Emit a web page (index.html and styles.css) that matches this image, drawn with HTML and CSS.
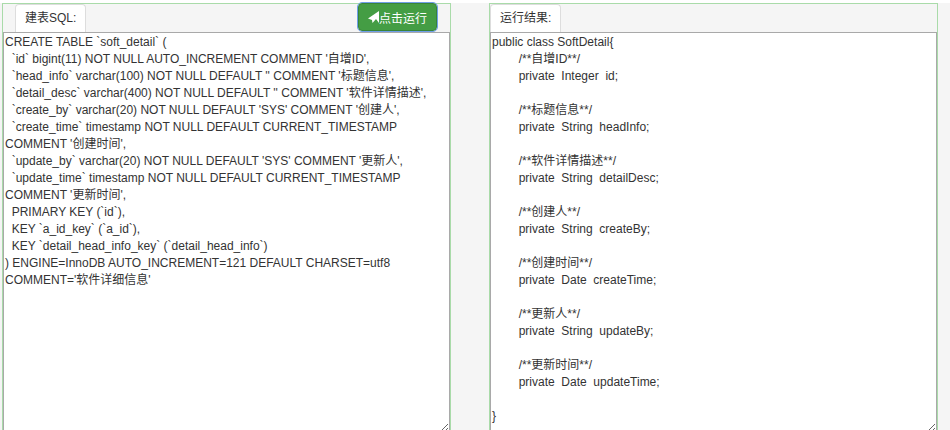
FILE: index.html
```html
<!DOCTYPE html>
<html lang="en">

<head>
    <meta charset="UTF-8">
    <title>SQL转Java</title>
    <link rel="stylesheet" href="styles.css">
</head>

<body>
    <div class="wrap">
        <div class="panel panel-left">
            <div class="tabs">
                <span class="tab">建表SQL:</span>
                <button class="run-btn" type="button">
                    <svg class="run-icon" viewBox="0 0 11 12" width="11" height="12"><path d="M0 7.5 11 0V12L8 8 4.5 12 4 9Z" fill="#fff"/></svg>点击运行
                </button>
            </div>
            <textarea class="code" spellcheck="false">CREATE TABLE `soft_detail` (
  `id` bigint(11) NOT NULL AUTO_INCREMENT COMMENT '自增ID',
  `head_info` varchar(100) NOT NULL DEFAULT '' COMMENT '标题信息',
  `detail_desc` varchar(400) NOT NULL DEFAULT '' COMMENT '软件详情描述',
  `create_by` varchar(20) NOT NULL DEFAULT 'SYS' COMMENT '创建人',
  `create_time` timestamp NOT NULL DEFAULT CURRENT_TIMESTAMP COMMENT '创建时间',
  `update_by` varchar(20) NOT NULL DEFAULT 'SYS' COMMENT '更新人',
  `update_time` timestamp NOT NULL DEFAULT CURRENT_TIMESTAMP COMMENT '更新时间',
  PRIMARY KEY (`id`),
  KEY `a_id_key` (`a_id`),
  KEY `detail_head_info_key` (`detail_head_info`)
) ENGINE=InnoDB AUTO_INCREMENT=121 DEFAULT CHARSET=utf8 COMMENT='软件详细信息'</textarea>
        </div>
        <div class="panel panel-right">
            <div class="tabs">
                <span class="tab">运行结果:</span>
            </div>
            <textarea class="code" spellcheck="false">public class SoftDetail{
        /**自增ID**/
        private  Integer  id;

        /**标题信息**/
        private  String  headInfo;

        /**软件详情描述**/
        private  String  detailDesc;

        /**创建人**/
        private  String  createBy;

        /**创建时间**/
        private  Date  createTime;

        /**更新人**/
        private  String  updateBy;

        /**更新时间**/
        private  Date  updateTime;

}</textarea>
        </div>
    </div>
</body>

</html>
```

FILE: styles.css
```css
html,
body {
    margin: 0;
    height: 100%;
    overflow: hidden;
    background: #fff;
    font-family: "Liberation Sans", "Noto Sans CJK SC", sans-serif;
    font-size: 12px;
    color: #333;
}

.wrap {
    display: flex;
    align-items: flex-start;
    gap: 38px;
    height: 430px;
    overflow: hidden;
    padding: 3px 0 0 2px;
    box-sizing: border-box;
    background: linear-gradient(#fff 3px, #f5f5f5 3px);
}

.panel {
    width: 449px;
    height: 430px;
    flex-shrink: 0;
    display: flex;
    flex-direction: column;
    box-sizing: border-box;
    border: 1px solid #a9dba9;
    border-bottom: none;
}

.tabs {
    height: 28px;
    display: flex;
    align-items: flex-start;
    justify-content: space-between;
    padding-left: 12px;
    flex-shrink: 0;
}

.panel-right .tabs {
    padding-left: 0;
}

.tab {
    height: 28px;
    line-height: 26px;
    padding: 0 9px;
    box-sizing: border-box;
    background: #fff;
    border: 1px solid #ddd;
    border-bottom: none;
    border-radius: 4px 4px 0 0;
    color: #333;
}

.run-btn {
    width: 79px;
    height: 28px;
    margin: -1px 13px 0 0;
    padding: 0;
    display: flex;
    align-items: center;
    justify-content: center;
    background: #449d44;
    border: 1px solid #398439;
    outline: 1px solid #6f9fe8;
    border-radius: 4px;
    color: #fff;
    font-family: inherit;
    font-size: 12px;
}

.code {
    flex: 1;
    display: block;
    margin: 0;
    padding: 1px;
    border: 1px solid #a9a9a9;
    background: #fff;
    color: #333;
    font-family: inherit;
    font-size: 12px;
    line-height: 17px;
    outline: none;
    resize: vertical;
}
```
